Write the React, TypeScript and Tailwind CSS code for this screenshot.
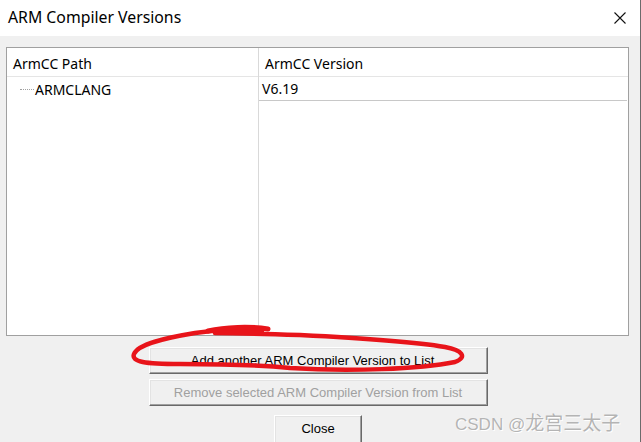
import React from "react";

const btnBase =
  "bg-[#f0f0f0] border border-t-[#ffffff] border-l-[#ffffff] border-b-[#696969] border-r-[#696969] shadow-[inset_-1px_-1px_0_#a0a0a0,inset_1px_1px_0_#e3e3e3] text-[13px] leading-none flex items-center justify-center";

export default function App() {
  return (
    <div
      className="relative w-[641px] h-[442px] overflow-hidden bg-[#f0f0f0] border-r border-[#6b6b6b] flex flex-col"
      style={{ fontFamily: '"Noto Sans", "Open Sans", sans-serif' }}
    >
      {/* Title bar */}
      <div className="h-[36px] bg-white flex items-center justify-between pl-[8px] pr-[14px] shrink-0">
        <span className="text-[15.8px] text-black">ARM Compiler Versions</span>
        <svg width="12" height="12" viewBox="0 0 12 12">
          <path d="M0.5 0.5 L11.5 11.5 M11.5 0.5 L0.5 11.5" stroke="#111" strokeWidth="1.1" />
        </svg>
      </div>

      {/* Body */}
      <div className="flex flex-col pt-[11px] pl-[6px] pr-[11px]">
        {/* List view */}
        <div className="h-[289px] border border-[#a0a0a0] bg-white flex text-[14px] text-black">
          {/* Column 1 */}
          <div className="w-[251px] flex flex-col">
            <div className="h-[29px] border-b border-[#e5e5e5] flex items-center pl-[6px] pt-[2px]">
              ArmCC Path
            </div>
            <div className="h-[24px] flex items-center pl-[13px]">
              <span className="w-[14px] border-t border-dotted border-[#a0a0a0] mr-[1px]"></span>
              <span>ARMCLANG</span>
            </div>
          </div>
          {/* Column 2 */}
          <div className="flex-1 border-l border-[#d9d9d9] flex flex-col">
            <div className="h-[29px] border-b border-[#e5e5e5] flex items-center pl-[6px] pt-[2px]">
              ArmCC Version
            </div>
            <div className="h-[24px] border-b border-[#c8c8c8] flex items-center pl-[3px] mr-[1px]">
              V6.19
            </div>
          </div>
        </div>

        {/* Buttons */}
        <div
          className="flex flex-col items-center mt-[11px] pl-[1px]"
          style={{ fontFamily: '"Liberation Sans", Arial, sans-serif' }}
        >
          <div className={btnBase + " h-[27px] w-[339px] text-black"}>
            Add another ARM Compiler Version to List...
          </div>
          <div className={btnBase + " h-[27px] w-[339px] mt-[5px] text-[#a0a0a0]"}>
            Remove selected ARM Compiler Version from List
          </div>
          <div className={btnBase + " h-[30px] w-[88px] mt-[9px] pb-[3px] text-black"}>Close</div>
        </div>
      </div>

      {/* Hand-drawn red annotation */}
      <svg
        className="absolute left-0 top-0 pointer-events-none"
        width="641"
        height="442"
        viewBox="0 0 641 442"
      >
        <path
          d="M 262 331 C 240 329, 215 330, 195 333 C 165 338, 138 344, 134 354 C 131 362, 145 364, 180 364 C 220 364, 260 365, 290 368 C 350 372, 420 369, 455 362 C 468 357, 462 350, 445 347 C 410 341, 360 338, 300 335 C 270 334, 240 333, 215 333"
          fill="none"
          stroke="#e8141a"
          strokeWidth="4.5"
          strokeLinecap="round"
          strokeLinejoin="round"
        />
        <path
          d="M 208 331 C 225 327, 250 326, 268 329"
          fill="none"
          stroke="#e8141a"
          strokeWidth="5"
          strokeLinecap="round"
        />
      </svg>

      {/* Watermark */}
      <div
        className="absolute left-[455px] top-[410px] text-[17px] text-[#b4b4b4] whitespace-nowrap [text-shadow:0_0_1px_#ffffff,1px_1px_0_#ffffff]"
        style={{ fontFamily: '"Liberation Sans", "Noto Sans CJK SC", sans-serif' }}
      >
        CSDN @<span className="text-[19px]">龙宫三太子</span>
      </div>
    </div>
  );
}
